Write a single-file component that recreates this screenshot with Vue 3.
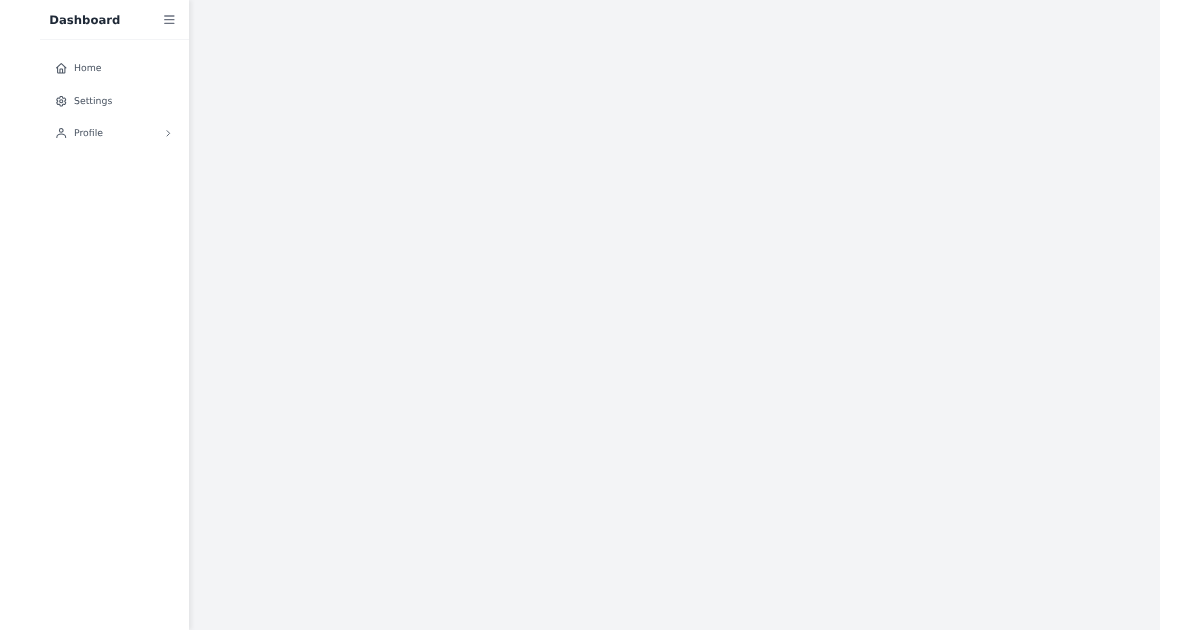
<script setup>
const items = [
  { label: 'Home', paths: ['M3 11.5l8.3-8a1 1 0 011.4 0l8.3 8M5 9.5V20a1 1 0 001 1h12a1 1 0 001-1V9.5M9.5 21v-6.5a1 1 0 011-1h3a1 1 0 011 1V21'] },
  { label: 'Settings', paths: ['M9.594 3.94c.09-.542.56-.94 1.11-.94h2.593c.55 0 1.02.398 1.11.94l.213 1.281c.063.374.313.686.645.87.074.04.147.083.22.127.324.196.72.257 1.075.124l1.217-.456a1.125 1.125 0 011.37.49l1.296 2.247a1.125 1.125 0 01-.26 1.431l-1.003.827c-.293.24-.438.613-.431.992a6.759 6.759 0 010 .255c-.007.378.138.75.43.99l1.005.828c.424.35.534.954.26 1.43l-1.298 2.247a1.125 1.125 0 01-1.369.491l-1.217-.456c-.355-.133-.75-.072-1.076.124a6.57 6.57 0 01-.22.128c-.331.183-.581.495-.644.869l-.213 1.28c-.09.543-.56.941-1.11.941h-2.594c-.55 0-1.02-.398-1.11-.94l-.213-1.281c-.062-.374-.312-.686-.644-.87a6.52 6.52 0 01-.22-.127c-.325-.196-.72-.257-1.076-.124l-1.217.456a1.125 1.125 0 01-1.369-.49l-1.297-2.247a1.125 1.125 0 01.26-1.431l1.004-.827c.292-.24.437-.613.43-.992a6.932 6.932 0 010-.255c.007-.378-.138-.75-.43-.99l-1.004-.828a1.125 1.125 0 01-.26-1.43l1.297-2.247a1.125 1.125 0 011.37-.491l1.216.456c.356.133.751.072 1.076-.124.072-.044.146-.087.22-.128.332-.183.582-.495.644-.869l.214-1.281z', 'M15 12a3 3 0 11-6 0 3 3 0 016 0z'] },
  { label: 'Profile', chevron: true, paths: ['M15.5 6.5a3.5 3.5 0 11-7 0 3.5 3.5 0 017 0z', 'M3.5 20a8.5 6.5 0 0117 0'] }
]
</script>

<template>
  <div class="page">
    <aside class="sidebar">
      <header class="head">
        <span class="title">Dashboard</span>
        <svg class="menu" viewBox="0 0 24 24" fill="none" stroke="currentColor" stroke-width="2.2" stroke-linecap="round" stroke-linejoin="round">
          <path d="M4.5 6.5h15M4.5 12.5h15M4.5 18.5h15" />
        </svg>
      </header>
      <nav class="nav">
        <a v-for="item in items" :key="item.label" class="item">
          <svg class="icon" viewBox="0 0 24 24" fill="none" stroke="currentColor" stroke-width="2" stroke-linecap="round" stroke-linejoin="round">
            <path v-for="d in item.paths" :key="d" :d="d" />
          </svg>
          <span class="label">{{ item.label }}</span>
          <svg v-if="item.chevron" class="chevron" viewBox="0 0 24 24" fill="none" stroke="currentColor" stroke-width="2" stroke-linecap="round" stroke-linejoin="round">
            <path d="M9 6l6 6-6 6" />
          </svg>
        </a>
      </nav>
    </aside>
    <main class="main"></main>
  </div>
</template>

<style>
html, body { margin: 0; background: #fff; }
</style>

<style scoped>
.page {
  width: 1120px;
  height: 630px;
  margin: 0 auto;
  display: flex;
  font-family: "DejaVu Sans", sans-serif;
  text-rendering: geometricPrecision;
  will-change: opacity;
}
.sidebar {
  width: 149.33px;
  flex: none;
  background: #fff;
  position: relative;
  z-index: 1;
  box-shadow: 3px 0 4px rgba(0,0,0,.06);
}
.head {
  height: 39px;
  border-bottom: 1px solid #f3f4f6;
  display: flex;
  align-items: center;
  justify-content: space-between;
  padding: 0 12.5px 0 9.33px;
}
.title {
  font-size: 11.67px;
  font-weight: 700;
  color: #1f2937;
}
.menu { width: 14.67px; height: 14.67px; color: #6b7280; }
.nav {
  display: flex;
  flex-direction: column;
  gap: 4px;
  padding: 13.5px 9.33px;
}
.item {
  display: flex;
  align-items: center;
  gap: 6.5px;
  height: 28.5px;
  padding: 2px 6.67px 0 5.67px;
  box-sizing: border-box;
  font-size: 9.33px;
  color: #4b5563;
}
.icon { width: 12.5px; height: 12.5px; flex: none; margin-top: -1px; }
.label { flex: 1; }
.chevron { width: 10.67px; height: 10.67px; flex: none; }
.main { flex: 1; background: #f3f4f6; }
</style>
